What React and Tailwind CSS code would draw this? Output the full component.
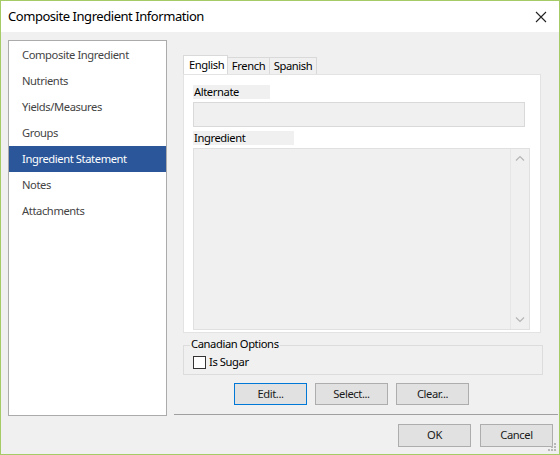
import React from "react";

const font = { fontFamily: '"Noto Sans", "Open Sans", Arial, sans-serif' };

const items = [
  "Composite Ingredient",
  "Nutrients",
  "Yields/Measures",
  "Groups",
  "Ingredient Statement",
  "Notes",
  "Attachments",
];

function Btn({ children, focused, w = "w-[73px]", h = "h-[22px]" }) {
  return (
    <div
      className={`${w} ${h} flex items-center justify-center text-[#1a1a1a] bg-[#e1e1e1] border ${
        focused ? "border-[#0078d7]" : "border-[#adadad]"
      }`}
    >
      {children}
    </div>
  );
}

export default function App() {
  return (
    <div
      className="w-[560px] h-[455px] border border-[#a4cb66] bg-[#f0f0f0] flex flex-col overflow-hidden relative text-[11.2px] tracking-[-0.4px]"
      style={font}
    >
      <div className="h-[31px] bg-white flex items-center justify-between pl-[7px] pr-[10px] shrink-0">
        <span className="text-[13px] tracking-[-0.45px] text-black">Composite Ingredient Information</span>
        <svg width="12" height="12" viewBox="0 0 12 12" className="mr-[2px]">
          <path d="M1 1 L11 11 M11 1 L1 11" stroke="#222" strokeWidth="1.1" />
        </svg>
      </div>
      <div className="flex flex-1 pt-[8px] pl-[7px]">
        <div className="w-[159px] h-[376px] bg-white border border-[#ababab] pt-[1px] shrink-0">
          {items.map((it) => (
            <div
              key={it}
              className={`h-[26px] flex items-center pl-[13px] ${
                it === "Ingredient Statement"
                  ? "bg-[#2b579a] text-white"
                  : "text-[#444]"
              }`}
            >
              {it}
            </div>
          ))}
        </div>
        <div className="flex flex-col ml-[7px] w-[384px]">
          <div className="ml-[9px] mt-[15px] flex items-end h-[19px]">
            <div className="h-[19px] pl-[5px] bg-white border border-b-0 border-[#d9d9d9] text-black flex items-center w-[45px]">
              English
            </div>
            <div className="h-[17px] bg-[#f0f0f0] border border-l-0 border-b-0 border-[#d9d9d9] text-black flex items-center justify-center w-[42px]">
              French
            </div>
            <div className="h-[17px] bg-[#f0f0f0] border border-l-0 border-b-0 border-[#d9d9d9] text-black flex items-center justify-center w-[47px]">
              Spanish
            </div>
          </div>
          <div className="ml-[9px] w-[358px] h-[259px] bg-white border border-[#e3e3e3] pt-[10px] pl-[9px]">
            <div className="w-[77px] h-[14px] bg-[#f0f0f0] text-black leading-[14px] pl-[1px]">
              Alternate
            </div>
            <div className="mt-[3px] w-[332px] h-[25px] bg-[#f0f0f0] border border-[#d9d9d9]" />
            <div className="mt-[4px] w-[101px] h-[14px] bg-[#f0f0f0] text-black leading-[14px] pl-[1px]">
              Ingredient
            </div>
            <div className="mt-[3px] w-[337px] h-[182px] bg-[#f0f0f0] border border-[#e0e0e0] flex">
              <div className="flex-1" />
              <div className="w-[19px] border-l border-[#e6e6e6] flex flex-col items-center justify-between py-[6px]">
                <svg width="10" height="7" viewBox="0 0 10 7">
                  <path d="M1 5.5 L5 1.5 L9 5.5" fill="none" stroke="#b5b5b5" strokeWidth="1.2" />
                </svg>
                <svg width="10" height="7" viewBox="0 0 10 7">
                  <path d="M1 1.5 L5 5.5 L9 1.5" fill="none" stroke="#b5b5b5" strokeWidth="1.2" />
                </svg>
              </div>
            </div>
          </div>
          <div className="relative ml-[9px] mt-[12px] w-[360px] h-[30px] border border-[#dcdcdc]">
            <span className="absolute left-[6px] -top-[9px] bg-[#f0f0f0] px-[1px] text-black leading-[14px]">
              Canadian Options
            </span>
            <div className="flex items-center mt-[9px] ml-[9px]">
              <div className="w-[13px] h-[13px] bg-white border border-[#333]" />
              <span className="ml-[3px] text-black leading-[14px]">Is Sugar</span>
            </div>
          </div>
          <div className="flex ml-[60px] mt-[8px] gap-[8px]">
            <Btn focused>Edit...</Btn>
            <Btn>Select...</Btn>
            <Btn>Clear...</Btn>
          </div>
          <div className="mt-[9px] h-px bg-[#a0a0a0] w-[384px]" />
          <div className="flex justify-end gap-[9px] mt-[9px] pr-[5px]">
            <Btn w="w-[73px]" h="h-[23px]">OK</Btn>
            <Btn w="w-[73px]" h="h-[23px]">Cancel</Btn>
          </div>
        </div>
      </div>
      <svg
        className="absolute right-[2px] bottom-[2px]"
        width="10"
        height="10"
        viewBox="0 0 10 10"
      >
        {[
          [8, 2],
          [8, 5],
          [5, 5],
          [8, 8],
          [5, 8],
          [2, 8],
        ].map(([x, y], i) => (
          <rect key={i} x={x - 1} y={y - 1} width="2" height="2" fill="#b8b8b8" />
        ))}
      </svg>
    </div>
  );
}
